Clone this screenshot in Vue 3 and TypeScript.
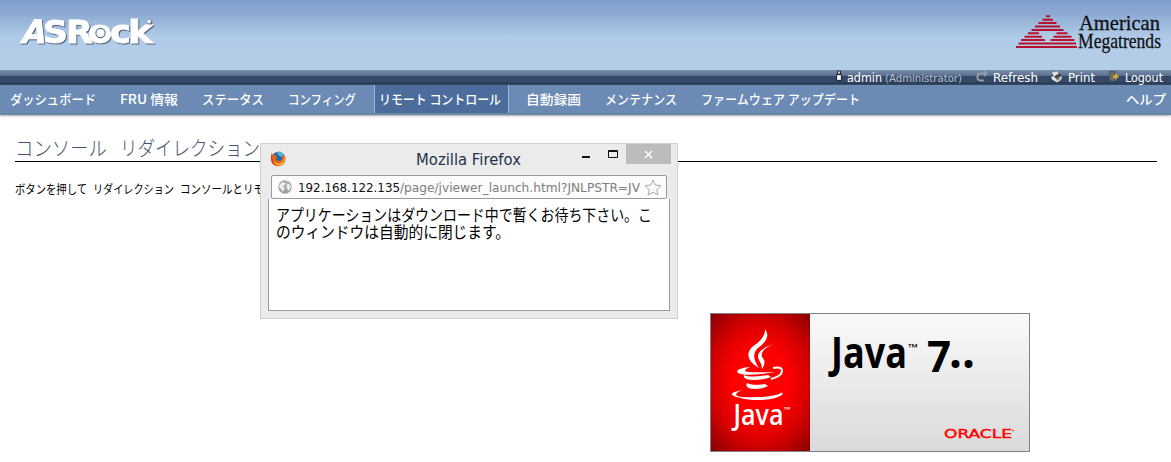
<script setup lang="ts">
import { h } from 'vue'

interface FitProps { text: string; w: number; base: number; tall: number }

// A single line of text set to an exact measure.
const FitText = (p: FitProps) =>
  h('svg', { class: 'fit', width: p.w, height: p.tall }, [
    h('text', { x: 0, y: p.base, textLength: p.w, lengthAdjust: 'spacingAndGlyphs', fill: 'currentColor' }, p.text),
  ])
FitText.props = ['text', 'w', 'base', 'tall']

interface MenuItem { label: string; w: number; active?: boolean }
const menu: MenuItem[] = [
  { label: 'ダッシュボード', w: 86 },
  { label: 'FRU 情報', w: 58 },
  { label: 'ステータス', w: 62 },
  { label: 'コンフィング', w: 68 },
  { label: 'リモート コントロール', w: 122, active: true },
  { label: '自動録画', w: 55 },
  { label: 'メンテナンス', w: 72 },
  { label: 'ファームウェア アップデート', w: 159 },
]
</script>

<template>
  <div class="page">
    <header class="banner">
      <svg class="brand" width="146" height="40" viewBox="0 0 146 40" aria-label="ASRock">
        <g class="brand-text">
          <text transform="translate(5 28.500) skewX(-14)" textLength="24" lengthAdjust="spacingAndGlyphs">A</text>
          <text x="28" y="28.500" textLength="25" lengthAdjust="spacingAndGlyphs">S</text>
          <text x="51" y="28.500" textLength="27" lengthAdjust="spacingAndGlyphs">R</text>
          <text x="73" y="28.500" textLength="24" lengthAdjust="spacingAndGlyphs">o</text>
          <text x="95" y="28.500" textLength="21" lengthAdjust="spacingAndGlyphs">c</text>
          <text x="113" y="28.500" textLength="25" lengthAdjust="spacingAndGlyphs">k</text>
        </g>
        <circle cx="85.500" cy="19" r="6.500" fill="#fff" />
        <circle cx="85.500" cy="19" r="4.600" fill="#fff" stroke="#586f91" stroke-width="1.100" />
        <circle cx="134" cy="7.500" r="2.200" fill="#fff" stroke="#6c8099" stroke-width=".6" />
      </svg>
      <svg class="ami" width="146" height="42" viewBox="0 0 146 42">
        <g stroke="#b8112e" stroke-width="2">
          <path d="M30 2.300h4M26.500 5.700h10.500M22.500 9.100h18M19 12.500h25M15.500 15.900h32" />
          <path d="M12 19.300h11M40.500 19.300h11M8.500 22.700h17.500M37.500 22.700h18M5 26.100h24M34.500 26.100h24M2.500 29.500h57.500M0 33h61" />
        </g>
        <g class="ami-text">
          <text x="63" y="16" textLength="81" lengthAdjust="spacingAndGlyphs">American</text>
          <text x="62" y="34" textLength="83" lengthAdjust="spacingAndGlyphs">Megatrends</text>
        </g>
      </svg>
    </header>
    <div class="userbar">
      <svg class="ico-user" width="8" height="12" viewBox="0 0 8 12">
        <path d="M2.500 1h3v3h-3zM1.500 4.500h5v6h-5z" fill="#dadada" stroke="#232a36" />
        <path d="M3 6h2v3H3z" fill="#fff" />
      </svg>
      <FitText class="ub-name" text="admin" :w="35" :base="12" :tall="15" />
      <FitText class="ub-role" text="(Administrator)" :w="77" :base="12" :tall="15" />
      <svg class="ico-refresh" width="13" height="13" viewBox="0 0 13 13">
        <path d="M8 10.500H4.500Q1.500 10.500 1.500 7.500V6Q1.500 3.500 4.500 3.500H9" fill="none" stroke="#969ba5" stroke-width="2" />
        <path d="M8 0l4 3.500-4 3.500z" fill="#969ba5" />
      </svg>
      <FitText class="ub-link" text="Refresh" :w="45" :base="12" :tall="15" />
      <svg class="ico-print" width="12" height="12" viewBox="0 0 12 12">
        <path d="M0 5l4-4 4 1 3 3v3l-5 4-5-3z" fill="#30343b" />
        <path d="M1 1.500l5-1 2 2.500-5 3zM0 6l2-1 4 3 4-3 1 1-1 3-4 2.500-5-3z" fill="#e4e4e0" />
        <path d="M3 5.500l4-2.500 3 2-4 3z" fill="#4a4d52" />
        <path d="M5 8.500l4-2 .5 1.500-3.500 2z" fill="#8d9092" />
      </svg>
      <FitText class="ub-link" text="Print" :w="27" :base="12" :tall="15" />
      <svg class="ico-logout" width="12" height="12" viewBox="0 0 12 12">
        <path d="M1 0h7v10H1z" fill="#52575d" /><path d="M2 1h4v9l-4-1z" fill="#666b70" />
        <path d="M5 4.500h2V2l4 3.500L7 9V7H5z" fill="#dba72e" />
      </svg>
      <FitText class="ub-link" text="Logout" :w="38" :base="12" :tall="15" />
    </div>
    <nav class="menu">
      <a v-for="m in menu" :key="m.label" class="item" :class="{ active: m.active }">
        <FitText :text="m.label" :w="m.w" :base="19" :tall="28" />
      </a>
      <a class="help"><FitText text="ヘルプ" :w="40" :base="19" :tall="28" /></a>
    </nav>

    <main class="content">
      <h1>
        <FitText text="コンソール" :w="92" :base="18" :tall="22" />
        <FitText text="リダイレクション" :w="140" :base="18" :tall="22" />
      </h1>
      <p>
        <FitText text="ボタンを押して" :w="72" :base="12" :tall="15" />
        <FitText text="リダイレクション" :w="81" :base="12" :tall="15" />
        <FitText text="コンソールとリモ" :w="84" :base="12" :tall="15" />
      </p>
    </main>

    <section class="popup">
      <div class="titlebar">
        <svg class="fox" width="16" height="16" viewBox="0 0 16 16">
          <circle cx="8.500" cy="7" r="6.300" fill="#2467a8" />
          <path d="M7 1q4-2 7 3l-3 2-3-2z" fill="#54b3da" />
          <path d="M1.500 2L4 4.500l3-.7L5.700 6l2 1.200-2.200 1Q7 10.500 10 9.800q3-1 2.300-5Q14 6 14 3q2 3.500 1.200 7Q13.600 15 8 15.300 2 15 1 9.500.400 5 1.500 2z" fill="#e66a18" />
          <path d="M13.700 5q1.300 6-4.200 7.700Q5 13.500 3 9q1 5.500 6 5.200 6-1 5.500-7.500z" fill="#f7c13b" />
          <path d="M1.500 4Q.200 9 3 12.500q2 2.300 5 2.500-5-2.500-5.500-7z" fill="#c93c23" />
        </svg>
        <FitText class="title" text="Mozilla Firefox" :w="105" :base="21" :tall="28" />
        <div class="controls">
          <svg width="40" height="20" viewBox="0 0 40 20">
            <path d="M0 13h8" stroke="#111" stroke-width="2" />
            <path d="M26.500 6.500h9v7h-9zM26 7.500h10" fill="none" stroke="#111" />
          </svg>
          <span class="close"><svg width="9" height="9" viewBox="0 0 9 9"><path d="M1 1l7 7M8 1L1 8" stroke="#fff" stroke-width="1.500" /></svg></span>
        </div>
      </div>
      <div class="urlbar">
        <svg class="globe" width="14" height="14" viewBox="0 0 14 14">
          <circle cx="7" cy="7" r="6.700" fill="#a1a1a1" />
          <path d="M2 4l3-2 3 1-1 2-2 1 2 2-2 4-2-3-2-2zM8 6l2-3 2 2 1 3-3 3-1-3zM8 1l2 .5-1 1z" fill="#ececec" />
        </svg>
        <FitText class="host" text="192.168.122.135" :w="102" :base="16" :tall="22" />
        <FitText class="path" text="/page/jviewer_launch.html?JNLPSTR=JV" :w="240" :base="16" :tall="22" />
        <svg class="star" width="18" height="17" viewBox="0 0 18 17">
          <path d="M9 1l2.300 5 5.700.600-4.200 4 1.200 5.400L9 13.300 4 16l1.200-5.400L1 6.600 6.700 6z" fill="#fafafa" stroke="#aaa" stroke-linejoin="round" />
        </svg>
      </div>
      <div class="viewport">
        <FitText text="アプリケーションはダウンロード中で暫くお待ち下さい。こ" :w="376" :base="14" :tall="17" />
        <FitText text="のウィンドウは自動的に閉じます。" :w="234" :base="14" :tall="17" />
      </div>
    </section>

    <section class="splash">
      <div class="splash-red">
        <svg width="99" height="137" viewBox="0 0 99 137">
          <g transform="translate(-2 0)">
            <g fill="#fff">
              <path d="M56 15Q63 24 49 34q-8 7 1 20Q33 44 43 33q14-9 13-18z" />
              <path d="M64 30Q51 36 53 43q5 5 0 12 0-5-3-9-5-9 14-16z" />
              <path d="M40 53Q25 55 29 59q7 4 38-1-30 1-31-1 0-2 5-4zM35 61q-2 5 10 5 9 0 17-3l-3-2q-18 3-24 0zM38 69q-3 6 8 6 7 0 13-3l-3-2q-13 2-18-1zM34 76q-13 2-11 5 7 5 30 4 20-1 20-7-5 5-26 5-18 1-20-2 0-3 7-5z" />
              <path d="M32 84q24 3 43-5-6 7-26 7-11 0-17-2z" />
            </g>
            <path d="M64 54q9-2 9 3 0 5-11 8" fill="none" stroke="#fff" stroke-width="2" />
          </g>
          <g class="java-white">
            <text x="22.500" y="111" font-size="29" textLength="50" lengthAdjust="spacingAndGlyphs">Java</text>
            <text x="72.500" y="98" font-size="7" textLength="7" lengthAdjust="spacingAndGlyphs">™</text>
          </g>
        </svg>
      </div>
      <svg class="splash-main" width="219" height="137" viewBox="0 0 219 137">
        <g class="java-black">
          <text x="21" y="54" font-size="43" textLength="76" lengthAdjust="spacingAndGlyphs">Java</text>
          <text x="98" y="37" font-size="10" textLength="10" lengthAdjust="spacingAndGlyphs">™</text>
          <text x="117" y="58" font-size="43" textLength="24" lengthAdjust="spacingAndGlyphs">7</text>
          <text x="139" y="54" font-size="49" textLength="26" lengthAdjust="spacingAndGlyphs">..</text>
        </g>
        <text class="oracle" x="134" y="124" textLength="68" lengthAdjust="spacingAndGlyphs">ORACLE</text>
        <circle cx="203" cy="116.500" r=".8" fill="#f00" />
      </svg>
    </section>
  </div>
</template>

<style>
html, body { overflow: hidden; background: #fff; }
</style>

<style scoped>
.page { position: relative; width: 1171px; height: 462px; overflow: hidden; background: #fff; font-family: "Noto Sans CJK JP", sans-serif; }
.page svg { display: block; flex: none; overflow: visible; }
.banner { box-sizing: border-box; height: 70px; padding: 14px 9px 0 15px; display: flex; justify-content: space-between; background: linear-gradient(#7d9dcb 0, #8eabd3 14px, #afcae7 36px, #b3cde9 50px); }
.brand { filter: drop-shadow(1px 1px .5px #54647c); }
.brand-text { font: bold 32px "DejaVu Sans", sans-serif; fill: #fff; stroke: #fff; stroke-width: .8px; }
.ami-text { font: 22px "Liberation Serif", serif; fill: #111; stroke: #111; stroke-width: .3px; }
.userbar { box-sizing: border-box; height: 15px; display: flex; justify-content: flex-end; padding-right: 8px; color: #fff; font: 12px "DejaVu Sans", sans-serif; background: linear-gradient(#7b8ca8 0, #586e90 6px, #344867 6px, #344867 12px, #2c3e59 12px); }
.ub-name { margin: 0 3px 0 4px; }
.ub-role { font-size: 10px; color: #b7bfca; }
.ico-refresh { margin: 0 4px 0 14px; }
.ico-print { margin: 1px 5px 0 13px; }
.ico-logout { margin: 1px 5px 0 13px; }
.menu { box-sizing: border-box; height: 30px; display: flex; padding-left: 10px; color: #fff; font-size: 13px; font-weight: 500; background: #6b8ab4; border-bottom: 2px solid #6988a5; box-shadow: 0 1px 2px #aaa; }
.item { margin-right: 24px; }
.item.active { box-sizing: border-box; width: 135px; padding-left: 4px; margin: 0 17px 0 -6px; border: solid #9db7d9; border-width: 0 1px; background: #4c6d9c; }
.help { margin-left: auto; margin-right: 5px; }
.content { padding: 23px 14px 0 15px; }
h1 { margin: 0; height: 23px; display: flex; gap: 13px; border-bottom: 1px solid #000; font-size: 20px; font-weight: 300; color: #44536b; }
p { margin: 20px 0 0; display: flex; gap: 6px; font-size: 12px; color: #000; }
.popup { position: absolute; left: 260px; top: 143px; box-sizing: border-box; width: 418px; height: 176px; border: 1px solid #cfcfcf; background: #ebebeb; }
.titlebar { height: 31px; display: flex; }
.fox { margin: 7px 0 0 9px; }
.title { margin-left: 130px; font: 15px "DejaVu Sans", sans-serif; color: #23334c; }
.controls { margin-left: auto; display: flex; padding-right: 6px; gap: 4px; }
.close { width: 45px; height: 20px; display: flex; align-items: center; justify-content: center; background: #bcbcbc; }
.urlbar { box-sizing: border-box; width: 396px; height: 24px; margin-left: 10px; border: 1px solid #999; border-radius: 2px; background: #fcfcfc; display: flex; font: 12px "DejaVu Sans", sans-serif; color: #111; }
.globe { margin: 4px 6px 0 6px; }
.path { color: #7d7d7d; }
.star { margin: 3px 0 0 4px; }
.viewport { box-sizing: border-box; width: 402px; height: 112px; margin: 0 0 0 7px; padding: 8px 0 0 7px; border: 1px solid #999; border-top: 0; background: #fff; font-size: 16px; color: #000; }
.splash { position: absolute; left: 710px; top: 313px; box-sizing: border-box; width: 320px; height: 139px; border: 1px solid #80808a; display: flex; background: linear-gradient(#fafafa, #dadada); }
.splash-red { width: 99px; background: radial-gradient(ellipse 78px 100px at 50% 50%, #f00 35%, #d80000 60%, #780000 100%); }
.java-white { font-family: "Open Sans", sans-serif; font-weight: 600; fill: #fff; }
.java-black { font-family: "Open Sans", sans-serif; font-weight: 700; fill: #000; }
.oracle { font: 12px "DejaVu Sans", sans-serif; fill: #f00; stroke: #f00; stroke-width: .4px; }
</style>
